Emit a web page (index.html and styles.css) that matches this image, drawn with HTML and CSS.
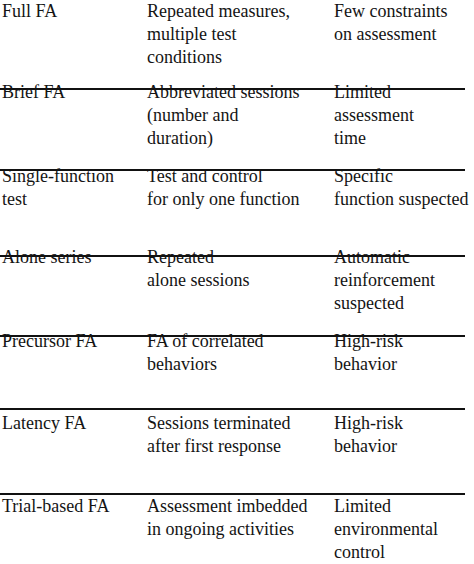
FILE: index.html
```html
<!DOCTYPE html>
<html lang="en">
<head>
<meta charset="utf-8">
<title>Functional analysis variations</title>
<link rel="stylesheet" href="styles.css">
</head>
<body>
<div class="table">
  <div class="row r1">
    <div class="cells">
      <div class="cell">Full FA</div>
      <div class="cell">Repeated measures,<br>multiple test<br>conditions</div>
      <div class="cell">Few constraints<br>on assessment</div>
    </div>
  </div>
  <div class="row r2">
    <div class="cells">
      <div class="cell">Brief FA</div>
      <div class="cell">Abbreviated sessions<br>(number and<br>duration)</div>
      <div class="cell">Limited<br>assessment<br>time</div>
    </div>
  </div>
  <div class="row r3">
    <div class="cells">
      <div class="cell">Single-function<br>test</div>
      <div class="cell">Test and control<br>for only one function</div>
      <div class="cell">Specific<br>function suspected</div>
    </div>
  </div>
  <div class="row r4">
    <div class="cells">
      <div class="cell">Alone series</div>
      <div class="cell">Repeated<br>alone sessions</div>
      <div class="cell">Automatic<br>reinforcement<br>suspected</div>
    </div>
  </div>
  <div class="row r5">
    <div class="cells">
      <div class="cell">Precursor FA</div>
      <div class="cell">FA of correlated<br>behaviors</div>
      <div class="cell">High-risk<br>behavior</div>
    </div>
  </div>
  <div class="row r6">
    <div class="cells">
      <div class="cell">Latency FA</div>
      <div class="cell">Sessions terminated<br>after first response</div>
      <div class="cell">High-risk<br>behavior</div>
    </div>
  </div>
  <div class="row r7">
    <div class="cells">
      <div class="cell">Trial-based FA</div>
      <div class="cell">Assessment imbedded<br>in ongoing activities</div>
      <div class="cell">Limited<br>environmental<br>control</div>
    </div>
  </div>
</div>
</body>
</html>
```
FILE: styles.css
```css
html, body {
  margin: 0;
  padding: 0;
  background: #ffffff;
}
body {
  font-family: "Liberation Serif", serif;
  font-size: 18px;
  line-height: 23px;
  color: #141414;
  overflow: hidden;
}
.table {
  width: 465px;
}
.row {
  border-top: 2px solid #111111;
}
.cells {
  display: grid;
  grid-template-columns: 145px 187px 133px;
  padding-left: 2px;
}
.cell {
  white-space: nowrap;
}
.r1 { border-top: none; padding-bottom: 19px; }
.r2 { padding-bottom: 19.3px; }
.r2 .cells { margin-top: -9.3px; }
.r3 { padding-bottom: 44px; }
.r3 .cells { margin-top: -6px; }
.r4 { padding-bottom: 19.6px; }
.r4 .cells { margin-top: -10.6px; }
.r5 { padding-bottom: 32px; }
.r5 .cells { margin-top: -7px; }
.r6 { padding-bottom: 34.6px; }
.r6 .cells { margin-top: 2.4px; }
.r7 .cells { margin-top: 0.4px; }
```
